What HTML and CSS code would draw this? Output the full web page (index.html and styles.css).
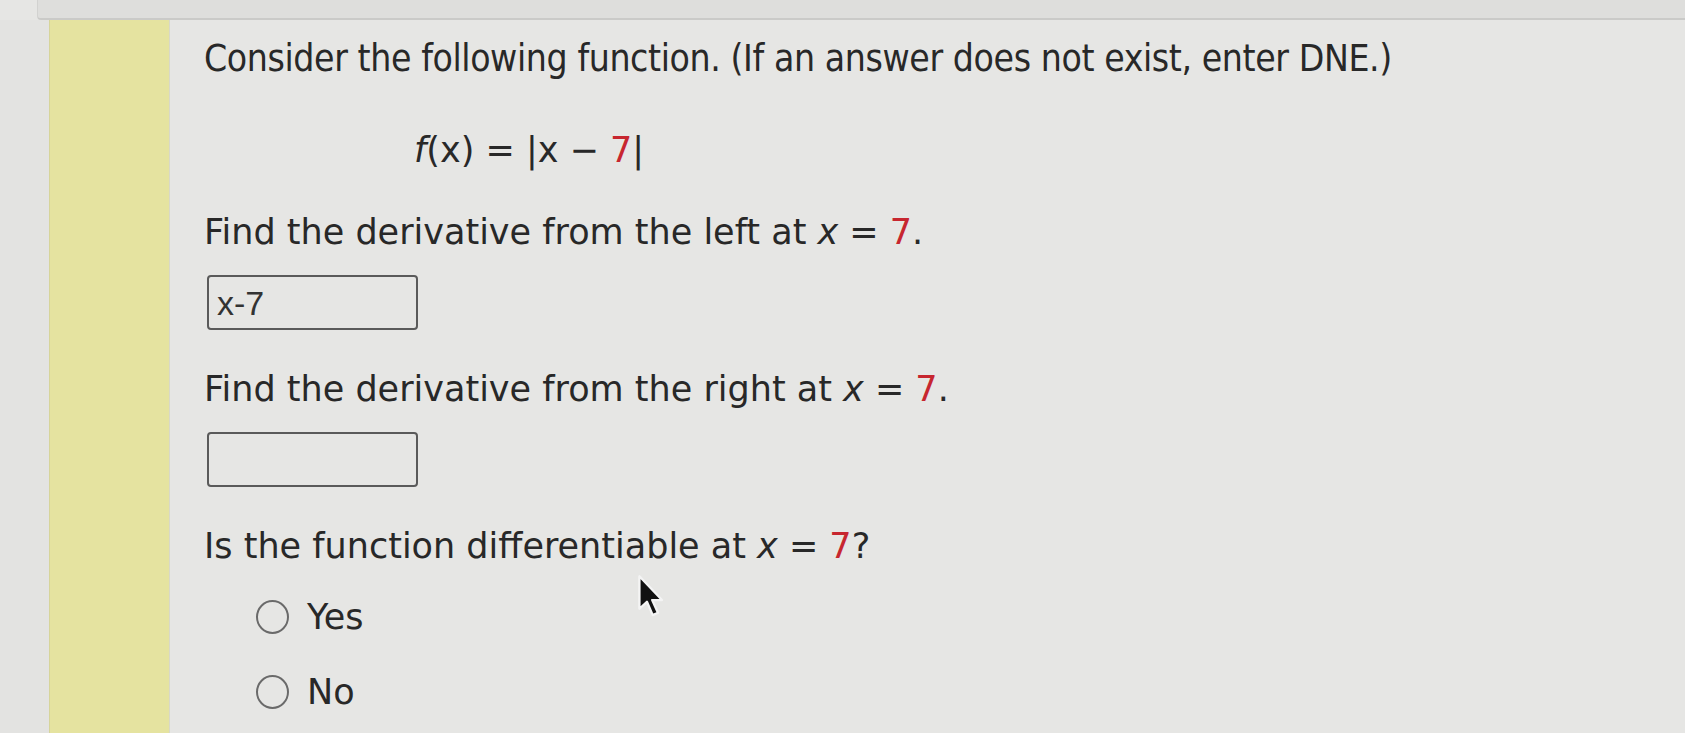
FILE: index.html
```html
<!DOCTYPE html>
<html>
<head>
<meta charset="utf-8">
<title>Derivative question</title>
<link rel="stylesheet" href="styles.css">
</head>
<body>
<div class="page">
  <div class="topbar"></div>
  <div class="gutter"></div>
  <div class="rail"></div>
  <main class="main">
    <p class="line title">Consider the following function. (If an answer does not exist, enter DNE.)</p>
    <p class="line formula"><i>f</i>(x) = |x − <span class="red">7</span>|</p>
    <p class="line q">Find the derivative from the left at <i>x</i> = <span class="red">7</span>.</p>
    <div class="answer">x-7</div>
    <p class="line q">Find the derivative from the right at <i>x</i> = <span class="red">7</span>.</p>
    <div class="answer"></div>
    <p class="line q">Is the function differentiable at <i>x</i> = <span class="red">7</span>?</p>
    <div class="options">
      <label class="option"><span class="radio"></span>Yes</label>
      <label class="option"><span class="radio"></span>No</label>
    </div>
  </main>
  <svg class="cursor" width="28" height="44" viewBox="0 0 24 38">
    <path d="M2 2 L2 30 L8.5 24 L13.5 35.5 L18 33.5 L13 22.5 L21.5 22.5 Z" fill="#111" stroke="#f4f4f4" stroke-width="2" stroke-linejoin="round"/>
  </svg>
</div>
</body>
</html>
```

FILE: styles.css
```css
html, body {
  margin: 0;
  padding: 0;
  background: #e7e7e5;
}

.page {
  position: relative;
  width: 1685px;
  height: 733px;
  overflow: hidden;
  display: grid;
  grid-template-columns: 49px 121px 1fr;
  grid-template-rows: 20px 1fr;
  background: #e6e6e4;
  font-family: "DejaVu Sans", Verdana, sans-serif;
  color: #282828;
}

.topbar {
  grid-column: 1 / -1;
  grid-row: 1;
  margin-left: 37px;
  background: #dededc;
  border-bottom: 2px solid #cacac8;
  border-left: 1px solid #d2d2d0;
  border-bottom-left-radius: 4px;
}

.gutter {
  grid-column: 1;
  grid-row: 2;
  background: #e3e3e1;
}

.rail {
  grid-column: 2;
  grid-row: 2;
  background: #e5e3a0;
  border-left: 1px solid #d6d49a;
  border-right: 1px solid #d8d8c8;
}

.main {
  grid-column: 3;
  grid-row: 2;
  padding: 17px 0 0 34px;
}

.line {
  margin: 0;
  font-size: 35px;
  line-height: 44px;
  white-space: nowrap;
}

.title {
  margin-bottom: 47px;
  font-family: "DejaVu Sans Condensed", "DejaVu Sans", Verdana, sans-serif;
  font-stretch: condensed;
  font-size: 37px;
  letter-spacing: -0.4px;
}

.formula {
  padding-left: 210px;
  margin-bottom: 38px;
}

.q {
  margin-bottom: 21px;
}

.red {
  color: #c7262f;
}

.answer {
  box-sizing: border-box;
  width: 211px;
  height: 55px;
  margin-left: 3px;
  margin-bottom: 37px;
  border: 2px solid #5a5a5a;
  border-radius: 4px;
  padding: 4px 0 0 8px;
  font-family: "Liberation Sans", Arial, sans-serif;
  font-size: 34px;
  line-height: 44px;
  color: #333;
}

.options {
  display: flex;
  flex-direction: column;
  gap: 31px;
  padding: 6px 0 0 52px;
}

.option {
  display: flex;
  align-items: center;
  gap: 18px;
  height: 44px;
  font-size: 35px;
}

.radio {
  box-sizing: border-box;
  width: 33px;
  height: 34px;
  border: 2px solid #6a6a6a;
  border-radius: 50%;
}

.cursor {
  position: absolute;
  left: 637px;
  top: 574px;
}
```
